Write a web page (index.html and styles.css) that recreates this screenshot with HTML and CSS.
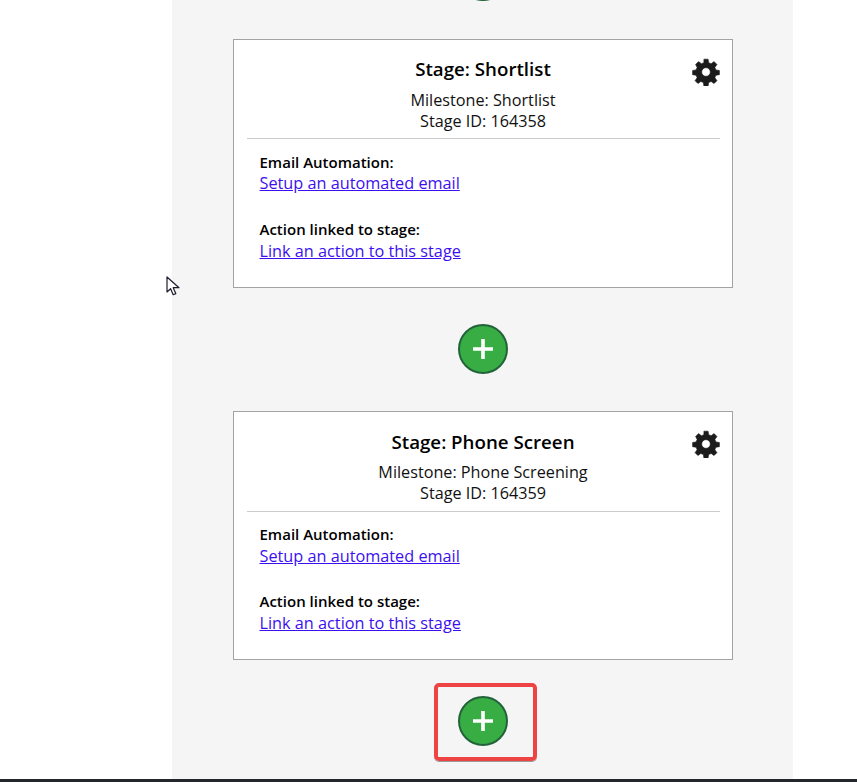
FILE: index.html
```html
<!DOCTYPE html>
<html lang="en">
<head>
    <meta charset="UTF-8">
    <title>Hiring Stages</title>
    <link rel="stylesheet" href="styles.css">
</head>
<body>
    <div class="page">
        <div class="stage-panel">
            <button class="add-btn" aria-label="Add stage">
                <svg width="22" height="22" viewBox="0 0 22 22"><path d="M9.2 1h3.6v8.2H21v3.6h-8.2V21H9.2v-8.2H1V9.2h8.2z" fill="#fff"/></svg>
            </button>

            <div class="stage-card">
                <svg class="gear" width="28" height="28" viewBox="0 0 24 24"><path fill="#1b1b1b" stroke="#1b1b1b" stroke-width="0.5" fill-rule="evenodd" d="M10.2 1h3.6l.5 3a8.3 8.3 0 0 1 2.1.9l2.5-1.8 2.5 2.5-1.8 2.500c.4.7.7 1.400.9 2.100l3 .5v3.600l-3 .5a8.300 8.300 0 0 1-.9 2.100l1.800 2.500-2.500 2.500-2.500-1.800a8.300 8.300 0 0 1-2.100.9l-.5 3h-3.600l-.5-3a8.300 8.300 0 0 1-2.100-.9l-2.500 1.800-2.500-2.500 1.800-2.500a8.300 8.300 0 0 1-.9-2.100l-3-.5v-3.600l3-.5c.2-.7.5-1.400.9-2.100L3.100 5.600l2.500-2.500 2.500 1.800a8.300 8.300 0 0 1 2.100-.9zM12 8.300a3.700 3.700 0 1 0 0 7.400 3.700 3.700 0 0 0 0-7.400z"/></svg>
                <div class="stage-head">
                    <h2>Stage: Shortlist</h2>
                    <p>Milestone: Shortlist</p>
                    <p>Stage ID: 164358</p>
                </div>
                <div class="stage-body">
                    <div class="stage-field">
                        <strong>Email Automation:</strong>
                        <a href="#">Setup an automated email</a>
                    </div>
                    <div class="stage-field">
                        <strong>Action linked to stage:</strong>
                        <a href="#">Link an action to this stage</a>
                    </div>
                </div>
            </div>

            <button class="add-btn" aria-label="Add stage">
                <svg width="22" height="22" viewBox="0 0 22 22"><path d="M9.2 1h3.6v8.2H21v3.6h-8.2V21H9.2v-8.2H1V9.2h8.2z" fill="#fff"/></svg>
            </button>

            <div class="stage-card">
                <svg class="gear" width="28" height="28" viewBox="0 0 24 24"><path fill="#1b1b1b" stroke="#1b1b1b" stroke-width="0.5" fill-rule="evenodd" d="M10.2 1h3.6l.5 3a8.3 8.3 0 0 1 2.1.9l2.5-1.8 2.5 2.5-1.8 2.500c.4.7.7 1.400.9 2.100l3 .5v3.600l-3 .5a8.300 8.300 0 0 1-.9 2.100l1.800 2.500-2.500 2.500-2.500-1.800a8.300 8.300 0 0 1-2.100.9l-.5 3h-3.600l-.5-3a8.300 8.300 0 0 1-2.100-.9l-2.500 1.800-2.500-2.500 1.800-2.500a8.300 8.300 0 0 1-.9-2.100l-3-.5v-3.600l3-.5c.2-.7.5-1.400.9-2.100L3.100 5.600l2.500-2.500 2.500 1.800a8.300 8.300 0 0 1 2.100-.9zM12 8.300a3.700 3.700 0 1 0 0 7.400 3.700 3.700 0 0 0 0-7.400z"/></svg>
                <div class="stage-head">
                    <h2>Stage: Phone Screen</h2>
                    <p>Milestone: Phone Screening</p>
                    <p>Stage ID: 164359</p>
                </div>
                <div class="stage-body">
                    <div class="stage-field">
                        <strong>Email Automation:</strong>
                        <a href="#">Setup an automated email</a>
                    </div>
                    <div class="stage-field">
                        <strong>Action linked to stage:</strong>
                        <a href="#">Link an action to this stage</a>
                    </div>
                </div>
            </div>

            <button class="add-btn" aria-label="Add stage">
                <svg width="22" height="22" viewBox="0 0 22 22"><path d="M9.2 1h3.6v8.2H21v3.6h-8.2V21H9.2v-8.2H1V9.2h8.2z" fill="#fff"/></svg>
            </button>
        </div>

        <div class="highlight-box"></div>

        <svg class="cursor" width="14" height="21" viewBox="0 0 14 21"><path d="M1 1v15l3.600-3.300 2.600 6 2.600-1.100-2.600-5.900H13z" fill="#fff" stroke="#1c1c2a" stroke-width="1.200" stroke-linejoin="round"/></svg>

        <div class="bottom-bar"></div>
    </div>
</body>
</html>
```

FILE: styles.css
```css
* {
    box-sizing: border-box;
}

body {
    font-family: "Open Sans", Arial, sans-serif;
    background-color: #ffffff;
    color: #111111;
    margin: 0;
    padding: 0;
}

.page {
    position: relative;
    height: 782px;
    overflow: hidden;
}

/* page is scrolled, the first button is almost out of view */
.stage-panel {
    width: 621px;
    height: 831px;
    margin-left: 172px;
    margin-top: -49px;
    background-color: #f5f5f5;
    display: flex;
    flex-direction: column;
    align-items: center;
}

.add-btn {
    width: 50px;
    height: 50px;
    flex-shrink: 0;
    padding: 0;
    border: 2px solid #22633a;
    border-radius: 50%;
    background-color: #37ad44;
    display: flex;
    align-items: center;
    justify-content: center;
    cursor: pointer;
}

.stage-card {
    position: relative;
    width: 500px;
    height: 249px;
    flex-shrink: 0;
    margin: 38px 0 36px;
    padding: 0 12px 0 13px;
    background-color: #ffffff;
    border: 1px solid #a3a3a3;
}

.stage-card + .add-btn + .stage-card {
    margin-top: 37.4px;
    margin-bottom: 35.6px;
}

.gear {
    position: absolute;
    top: 18px;
    right: 12px;
}

.stage-head {
    padding-top: 15.2px;
    height: 99.4px;
    text-align: center;
    border-bottom: 1px solid #cccccc;
}

.stage-head h2 {
    margin: 0 0 7.4px;
    font-size: 18.72px;
    line-height: 27px;
    font-weight: 600;
    color: #000000;
}

.stage-head p {
    margin: 0;
    font-size: 16.2px;
    line-height: 21px;
}

.stage-body {
    padding: 12.5px 13px 0;
}

.stage-field {
    margin-bottom: 24px;
    font-size: 16.25px;
    line-height: 21.55px;
}

.stage-field strong {
    display: block;
    font-size: 15px;
    font-weight: 600;
    color: #000000;
}

.stage-field a {
    color: #3c0ff0;
}

.highlight-box {
    position: absolute;
    left: 434px;
    top: 683px;
    width: 103px;
    height: 78px;
    border: 4px solid #ee4343;
    border-radius: 5px;
    box-shadow: 0 1px 0 #9a9a9a;
}

.cursor {
    position: absolute;
    left: 166px;
    top: 276px;
}

.bottom-bar {
    position: absolute;
    left: 0;
    right: 0;
    bottom: 0;
    height: 3px;
    background-color: #23272b;
}
```
